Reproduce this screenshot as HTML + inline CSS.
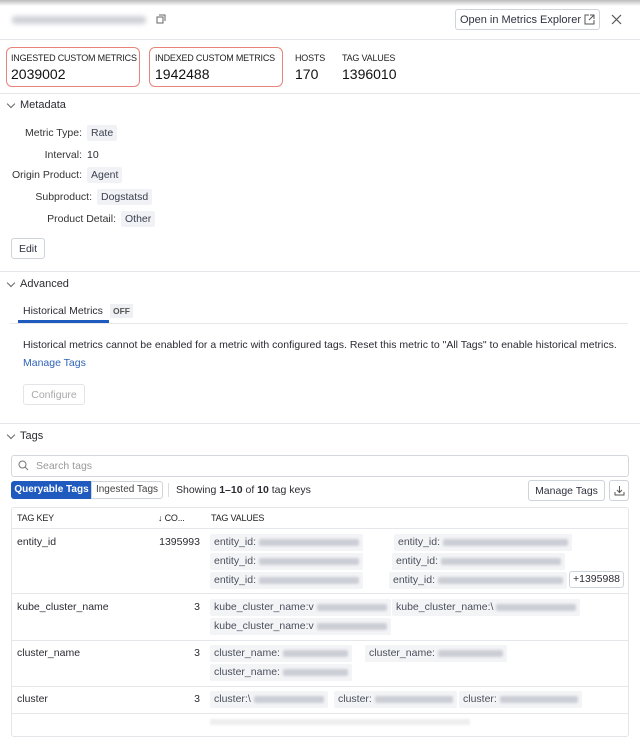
<!DOCTYPE html>
<html><head><meta charset="utf-8"><style>
*{box-sizing:border-box;margin:0;padding:0}
body{width:640px;height:723px;overflow:hidden;background:#fff;font-family:"Liberation Sans",sans-serif;font-size:10.5px;color:#2b2b33;position:relative}
.a{position:absolute;white-space:nowrap}
.hr{position:absolute;left:0;width:640px;height:1px;background:#e4e6ea}
.btn{position:absolute;border:1px solid #cfd3da;border-radius:3px;background:#fff;display:flex;align-items:center;justify-content:center;color:#2f3340}
.box{position:absolute;border:1px solid #e8837a;border-radius:6px;height:40px;top:47px}
.lbl{font-size:9px;color:#222;letter-spacing:-.2px}
.val{font-size:14px;color:#111}
.chip{display:inline-block;background:#f1f2f5;color:#3c4150;padding:0 4px;border-radius:2px;line-height:16px}
.k{text-align:right;color:#333}
.blur{display:inline-block;height:7px;background:#ccced6;border-radius:2px;filter:blur(1.3px);vertical-align:middle;margin-left:3px}
.tag{position:absolute;background:#f3f4f6;border-radius:2px;line-height:17px;padding:0 4px;color:#4a4f5c;white-space:nowrap}
.chev{position:absolute;width:6px;height:6px;border-right:1px solid #666;border-bottom:1px solid #666;transform:rotate(45deg)}
</style></head><body>
<div class="a" style="left:0;top:0;width:640px;height:6px;background:linear-gradient(#bbb,#fff)"></div>
<div class="a" style="left:12px;top:16px;width:134px;height:8px;background:#cfd1d6;filter:blur(2.5px);border-radius:3px"></div>
<svg class="a" style="left:156px;top:14px" width="10" height="10" viewBox="0 0 10 10"><rect x="1" y="3" width="6" height="6" fill="none" stroke="#666"/><path d="M3 1H9V7" fill="none" stroke="#666"/></svg>
<div class="btn" style="left:455px;top:9px;width:145px;height:21px;font-size:11px">Open in Metrics Explorer&nbsp;<svg width="11" height="11" viewBox="0 0 11 11"><path d="M5 1H1V10H10V6M6 1H10V5M10 1L5 6" fill="none" stroke="#555"/></svg></div>
<svg class="a" style="left:611px;top:14px" width="11" height="11"><path d="M1 1L10 10M10 1L1 10" stroke="#555" stroke-width="1.2"/></svg>
<div class="hr" style="top:39px"></div>
<div class="box" style="left:6px;width:134px"></div>
<div class="box" style="left:149px;width:134px"></div>
<div class="a lbl" style="left:11px;top:53px">INGESTED CUSTOM METRICS</div>
<div class="a val" style="left:11px;top:66px">2039002</div>
<div class="a lbl" style="left:155px;top:53px">INDEXED CUSTOM METRICS</div>
<div class="a val" style="left:155px;top:66px">1942488</div>
<div class="a lbl" style="left:295px;top:53px">HOSTS</div>
<div class="a val" style="left:295px;top:66px">170</div>
<div class="a lbl" style="left:342px;top:53px">TAG VALUES</div>
<div class="a val" style="left:342px;top:66px">1396010</div>
<div class="hr" style="top:93px"></div>
<div class="chev" style="left:8px;top:101px"></div>
<div class="a" style="left:20px;top:99px;font-size:11px">Metadata</div>
<div class="a k" style="left:0;width:82px;top:127px">Metric Type:</div><div class="a chip" style="left:87px;top:125px">Rate</div>
<div class="a k" style="left:0;width:82px;top:149px">Interval:</div><div class="a" style="left:87px;top:149px">10</div>
<div class="a k" style="left:0;width:82px;top:169px">Origin Product:</div><div class="a chip" style="left:87px;top:167px">Agent</div>
<div class="a k" style="left:0;width:92px;top:191px">Subproduct:</div><div class="a chip" style="left:97px;top:189px">Dogstatsd</div>
<div class="a k" style="left:0;width:116px;top:213px">Product Detail:</div><div class="a chip" style="left:121px;top:211px">Other</div>
<div class="btn" style="left:11px;top:238px;width:34px;height:21px">Edit</div>
<div class="hr" style="top:271px"></div>
<div class="chev" style="left:8px;top:280px"></div>
<div class="a" style="left:20px;top:278px;font-size:11px">Advanced</div>
<div class="a" style="left:23px;top:305px">Historical Metrics</div>
<div class="a" style="left:110px;top:304px;background:#eef0f3;font-size:8.5px;font-weight:bold;padding:2px 3px;color:#555">OFF</div>
<div class="a" style="left:10px;top:323px;width:618px;height:1px;background:#e6e8eb"></div>
<div class="a" style="left:18px;top:320px;width:91px;height:3px;background:#1f5bbf"></div>
<div class="a" style="left:23px;top:339px">Historical metrics cannot be enabled for a metric with configured tags. Reset this metric to "All Tags" to enable historical metrics.</div>
<div class="a" style="left:23px;top:357px;color:#2f63b8">Manage Tags</div>
<div class="btn" style="left:23px;top:384px;width:62px;height:21px;color:#aaa;border-color:#e2e4e8">Configure</div>
<div class="hr" style="top:423px"></div>
<div class="chev" style="left:8px;top:432px"></div>
<div class="a" style="left:20px;top:430px;font-size:11px">Tags</div>
<div class="a" style="left:11px;top:455px;width:618px;height:22px;border:1px solid #d4d7dd;border-radius:3px"></div>
<svg class="a" style="left:18px;top:460px" width="11" height="11"><circle cx="4.5" cy="4.5" r="3.5" fill="none" stroke="#777"/><path d="M7 7L10 10" stroke="#777"/></svg>
<div class="a" style="left:36px;top:460px;color:#999">Search tags</div>
<div class="a" style="left:11px;top:481px;width:81px;height:18px;background:#1f5bbf;color:#fff;border-radius:3px 0 0 3px;font-weight:bold;font-size:10px;text-align:center;line-height:18px">Queryable Tags</div>
<div class="a" style="left:91px;top:481px;width:72px;height:18px;border:1px solid #cfd3da;border-radius:0 3px 3px 0;font-size:10px;text-align:center;line-height:16px;color:#444">Ingested Tags</div>
<div class="a" style="left:168px;top:483px;width:1px;height:14px;background:#ddd"></div>
<div class="a" style="left:176px;top:484px">Showing <b>1–10</b> of <b>10</b> tag keys</div>
<div class="btn" style="left:528px;top:480px;width:77px;height:21px">Manage Tags</div>
<div class="btn" style="left:609px;top:480px;width:20px;height:21px"><svg width="11" height="11"><path d="M5.5 1V7M3 5L5.5 7.5L8 5M1 7V10H10V7" fill="none" stroke="#555"/></svg></div>
<div class="a" style="left:11px;top:507px;width:618px;height:230px;border:1px solid #e4e6ea;border-radius:3px"></div>
<div class="a lbl" style="left:17px;top:513px">TAG KEY</div>
<div class="a lbl" style="left:158px;top:513px">↓ CO...</div>
<div class="a lbl" style="left:211px;top:513px">TAG VALUES</div>
<div class="a" style="left:11px;top:528px;width:618px;height:1px;background:#e4e6ea"></div>
<div class="a" style="left:17px;top:536px">entity_id</div>
<div class="a" style="left:140px;width:60px;text-align:right;top:536px">1395993</div>
<div class="tag" style="left:210px;top:534px">entity_id:<span class="blur" style="width:100px"></span></div>
<div class="tag" style="left:394px;top:534px">entity_id:<span class="blur" style="width:125px"></span></div>
<div class="tag" style="left:210px;top:553px">entity_id:<span class="blur" style="width:100px"></span></div>
<div class="tag" style="left:392px;top:553px">entity_id:<span class="blur" style="width:120px"></span></div>
<div class="tag" style="left:210px;top:572px">entity_id:<span class="blur" style="width:100px"></span></div>
<div class="tag" style="left:389px;top:572px">entity_id:<span class="blur" style="width:125px"></span></div>
<div class="a" style="left:569px;top:571px;border:1px solid #cfd3da;border-radius:3px;padding:0 3px;line-height:15px">+1395988</div>
<div class="a" style="left:11px;top:593px;width:618px;height:1px;background:#e4e6ea"></div>
<div class="a" style="left:17px;top:601px">kube_cluster_name</div>
<div class="a" style="left:140px;width:60px;text-align:right;top:601px">3</div>
<div class="tag" style="left:210px;top:599px">kube_cluster_name:v<span class="blur" style="width:70px"></span></div>
<div class="tag" style="left:392px;top:599px">kube_cluster_name:\<span class="blur" style="width:80px"></span></div>
<div class="tag" style="left:210px;top:618px">kube_cluster_name:v<span class="blur" style="width:70px"></span></div>
<div class="a" style="left:11px;top:640px;width:618px;height:1px;background:#e4e6ea"></div>
<div class="a" style="left:17px;top:647px">cluster_name</div>
<div class="a" style="left:140px;width:60px;text-align:right;top:647px">3</div>
<div class="tag" style="left:210px;top:645px">cluster_name:<span class="blur" style="width:65px"></span></div>
<div class="tag" style="left:365px;top:645px">cluster_name:<span class="blur" style="width:65px"></span></div>
<div class="tag" style="left:210px;top:664px">cluster_name:<span class="blur" style="width:65px"></span></div>
<div class="a" style="left:11px;top:686px;width:618px;height:1px;background:#e4e6ea"></div>
<div class="a" style="left:17px;top:693px">cluster</div>
<div class="a" style="left:140px;width:60px;text-align:right;top:693px">3</div>
<div class="tag" style="left:210px;top:691px">cluster:\<span class="blur" style="width:70px"></span></div>
<div class="tag" style="left:334px;top:691px">cluster:<span class="blur" style="width:78px"></span></div>
<div class="tag" style="left:459px;top:691px">cluster:<span class="blur" style="width:78px"></span></div>
<div class="a" style="left:11px;top:713px;width:618px;height:1px;background:#e4e6ea"></div>
<div class="a" style="left:210px;top:719px;width:260px;height:6px;background:#eee;filter:blur(1px)"></div>
</body></html>
